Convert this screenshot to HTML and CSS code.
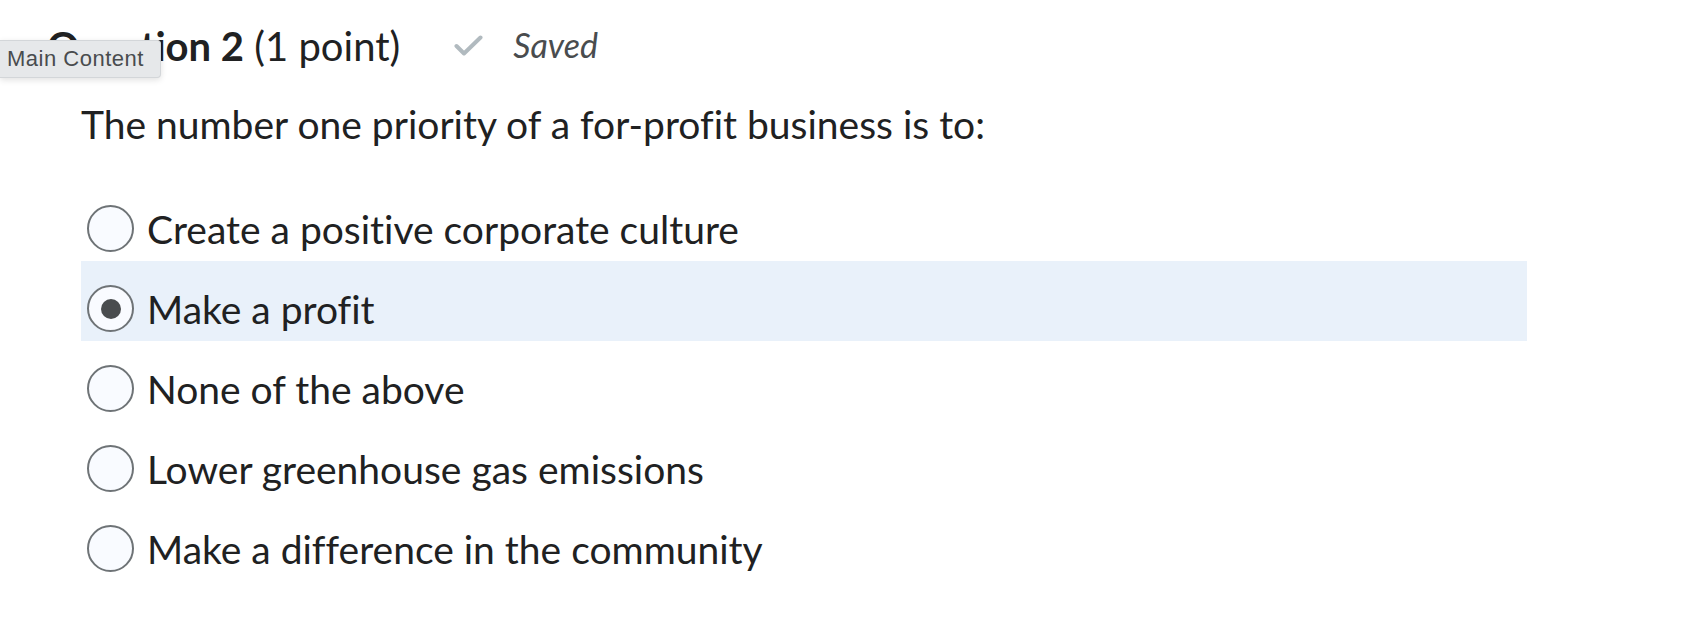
FILE: index.html
```html
<!DOCTYPE html>
<html lang="en">
<head>
<meta charset="utf-8">
<title>Question 2</title>
<link rel="stylesheet" href="styles.css">
</head>
<body>
<div class="page">
  <div class="skip-tip">Main Content</div>
  <div class="q-header">
    <h2 class="q-title"><span class="q-num">Question 2</span> <span class="q-points">(1 point)</span></h2>
    <span class="q-status">
      <svg class="check" width="29" height="21" viewBox="0 0 29 21" aria-hidden="true">
        <polyline points="2.5,11 10,18.5 26.5,2.5" fill="none" stroke="#b1babf" stroke-width="4" stroke-linecap="round" stroke-linejoin="round"/>
      </svg>
      <span class="saved">Saved</span>
    </span>
  </div>
  <div class="q-body">
    <p class="q-text">The number one priority of a for-profit business is to:</p>
    <div class="options">
      <label class="option"><span class="radio"></span><span class="opt-text">Create a positive corporate culture</span></label>
      <label class="option selected"><span class="radio checked"></span><span class="opt-text">Make a profit</span></label>
      <label class="option"><span class="radio"></span><span class="opt-text">None of the above</span></label>
      <label class="option"><span class="radio"></span><span class="opt-text">Lower greenhouse gas emissions</span></label>
      <label class="option"><span class="radio"></span><span class="opt-text">Make a difference in the community</span></label>
    </div>
  </div>
</div>
</body>
</html>
```
FILE: styles.css
```css
html, body {
  margin: 0;
  padding: 0;
  background: #ffffff;
}

body {
  font-family: Lato, "Open Sans", sans-serif;
  color: #202122;
  font-variant-ligatures: none;
}

.page {
  position: relative;
  width: 1700px;
  height: 620px;
}

.skip-tip {
  position: absolute;
  left: 0;
  top: 40px;
  width: 161px;
  height: 38px;
  box-sizing: border-box;
  padding-left: 7px;
  display: flex;
  align-items: center;
  font-family: "Liberation Sans", Arial, sans-serif;
  font-size: 22px;
  letter-spacing: 0.5px;
  color: #494c4e;
  background: #e6e8ea;
  border: 1px solid #d3d6d9;
  border-left: none;
  border-radius: 0 4px 4px 0;
  box-shadow: 0 2px 6px rgba(0, 0, 0, 0.12);
}

.q-header {
  display: flex;
  align-items: center;
  padding: 23px 0 0 47px;
  height: 46px;
}

.q-title {
  margin: 0;
  font-size: 40px;
  line-height: 46px;
  font-weight: 400;
  white-space: nowrap;
}

.q-num {
  font-weight: 700;
}

.q-status {
  display: flex;
  align-items: center;
  margin-left: 54px;
  margin-bottom: 3px;
  gap: 30px;
}

.check {
  display: block;
  margin-top: 2px;
}

.saved {
  font-style: italic;
  font-size: 34px;
  color: #494c4e;
}

.q-body {
  padding-left: 81px;
}

.q-text {
  margin: 32px 0 0 0;
  font-size: 39px;
  line-height: 46px;
}

.options {
  margin-top: 34px;
  width: 1446px;
}

.option {
  display: flex;
  align-items: center;
  height: 80px;
  box-sizing: border-box;
  padding: 15px 0 0 6px;
  font-size: 39px;
  line-height: 46px;
}

.option.selected {
  background: #e9f1fa;
}

.radio {
  flex: none;
  width: 47px;
  height: 47px;
  box-sizing: border-box;
  border: 2px solid #6e7376;
  border-radius: 50%;
  background: #f9fbff;
  display: flex;
  align-items: center;
  justify-content: center;
}

.radio.checked::after {
  content: "";
  width: 20px;
  height: 20px;
  border-radius: 50%;
  background: #494c4e;
}

.opt-text {
  margin-left: 13px;
}
```
